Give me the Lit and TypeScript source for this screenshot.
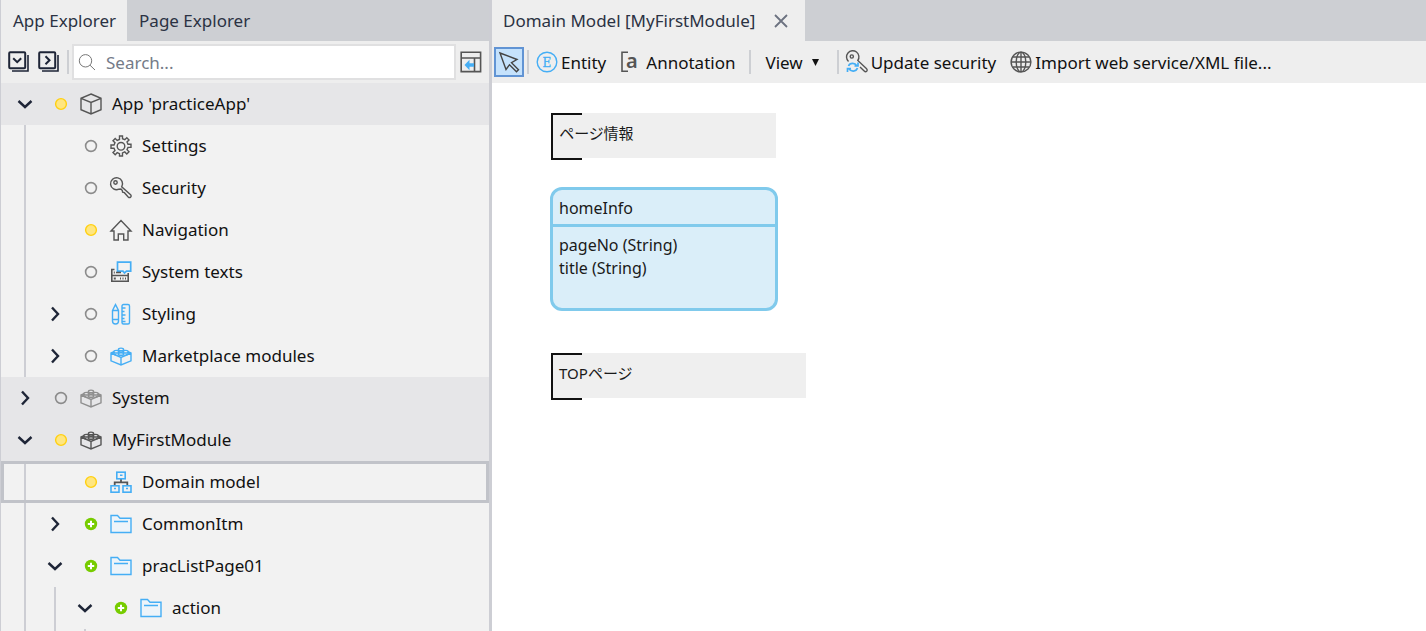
import { LitElement, html, svg, css, nothing, TemplateResult } from 'lit';
import { customElement, property, state } from 'lit/decorators.js';
import { classMap } from 'lit/directives/class-map.js';

const brick = svg`
  <path d="M4 6.6 1 8v7.8l10 4.200 10-4.200V8l-3-1.400M1 8l10 4.400L21 8M11 12.400V20"/>
  <path d="M8.400 4.400v1.400c0 .8 1.200 1.400 2.600 1.400s2.600-.6 2.600-1.400V4.400M3.800 6.800v1.600c0 .7 1 1.300 2.400 1.300M18.200 6.800v1.600c0 .7-1 1.300-2.400 1.300M8.400 9v1.600M13.600 9v1.600"/>
  <ellipse cx="11" cy="4.400" rx="2.600" ry="1.300"/>
  <ellipse cx="6.300" cy="6.700" rx="2.500" ry="1.300"/>
  <ellipse cx="15.700" cy="6.700" rx="2.500" ry="1.300"/>
  <ellipse cx="11" cy="9" rx="2.600" ry="1.300"/>`;

const icons: Record<string, TemplateResult> = {
  cube: svg`<path d="M11 1 21 5.300v11.400L11 21 1 16.700V5.300zM1 5.300l10 4.200 10-4.200M11 9.500V21"/>`,
  gear: svg`<path d="M9.500 1h3v2.700l2.300 1 2-2 2.200 2.200-2 2 1 2.300H21v3.200h-3l-1 2.300 2 2-2.200 2.200-2-2-2.300 1V21h-3v-2.300l-2.300-1-2 2L3 17.500l2-2-1-2.300H1V10h3l1-2.300-2-2 2.200-2.200 2 2 2.300-1z"/><circle cx="11" cy="11.300" r="3.800"/>`,
  key: svg`
    <path d="M11.700 9.800A6 6 0 1 0 9 12.200L11 12l1.300 1.500.3 1.700 1.800.5 3.800 4.200c.7.7 1.700.8 2.400.2.700-.7.700-1.700 0-2.400z"/>
    <circle cx="5.500" cy="5.500" r="1.700"/>`,
  home: svg`<path d="M1 12 11 1.500 21 12h-3v9h-4.300v-6H8.300v6H4v-9z"/>`,
  texts: svg`
    <path class="blue" stroke-width="1.700" d="M7.500 1.200h13.200v9h-4.200L14.500 12l-1.500-1.800H7.500z"/>
    <path stroke-width="1.600" d="M4.500 8.500H1.800V20.200h16.400V12M1.800 14.500h16.400M6 11.500h5"/>
    <path stroke-width="2" d="M3.800 11.500h1M3.800 17.500h2M10 17.500h1M12.500 17.500h1M15 17.500h1"/>`,
  styling: svg`
    <path d="M2.500 7.500 5.500 1.500l3 6V18c0 4-6 4-6 0zM2.500 7.500h6M2.500 16.500h6M5.500 1.500v2"/>
    <rect x="12" y="1.500" width="7.500" height="19.500" rx="1.500"/>
    <path d="M12 5h3.500M12 8.500h2.500M12 12h3.500M12 15.500h2.500M12 18.500h3.500"/>`,
  brick,
  domain: svg`
    <path d="M11 8v3.200M4.700 14.500v-3.200h12.600v3.200" stroke-width="1.800"/>
    <g class="blue" stroke-width="1.600"><rect x="6.800" y="1.200" width="8.400" height="6.600"/><rect x="1" y="14.800" width="8" height="6.400"/><rect x="13" y="14.800" width="8" height="6.400"/>
    <path d="M10 4.200h2.500M4 17.500h2M16 17.500h2" stroke-width="1.600"/></g>`,
  folder: svg`<path fill="#eef4f9" d="M1 19.500v-17h6.500l2.500 2.700h11v14.300zM4 8.500h14"/>`,
  collapse: svg`<path d="M20 4v16H4" stroke-width="1.600"/><rect x="1.200" y="1.200" width="16" height="16" rx="1" stroke-width="2"/><path d="m5.200 7.200 4 4 4-4" stroke-width="2"/>`,
  expand: svg`<path d="M20 4v16H4" stroke-width="1.600"/><rect x="1.200" y="1.200" width="16" height="16" rx="1" stroke-width="2"/><path d="m7.500 5.200 4 4-4 4" stroke-width="2"/>`,
  dock: svg`
    <path d="M1.200 1.200h19.400v19.400H1.200zM1.200 7h19.400M14.500 7v13.600" stroke-width="1.600"/>
    <path class="solid" d="M4.500 14 9.500 8.800v3.500H14v3.400H9.500v3.500z"/>`,
  search: svg`<circle cx="7.500" cy="9.800" r="6.200" stroke-width="1"/><path d="m12 14.200 5 4.800" stroke-width="1"/>`,
  close: svg`<path d="m5 5 12 12M17 5 5 17" stroke-width="1.800"/>`,
  pointer: svg`<path d="M2 2 19 8.500l-5.500 3.200 7 7-2 2-7-7L8 18.500z"/>`,
  entity: svg`<circle class="blue" cx="11" cy="11" r="9.800"/><text class="blue-text" x="11" y="15.500" text-anchor="middle">E</text>`,
  annotation: svg`<path d="M8 1.200H2v19h6" stroke-width="1.600"/><text class="letter" x="6" y="16.500">a</text>`,
  keysync: svg`
    <path d="M2.500 10.500A6.200 6.200 0 1 1 11.800 9.500l8.800 8.300c.8.800.8 1.700.1 2.500-.8.700-1.700.6-2.500-.2L14 16"/><circle cx="5.800" cy="5.500" r="1.600"/>
    <path class="blue" d="M2.500 15c1.500-3.500 6.500-3.500 8-.5M11.500 17c-1.500 4-6.500 4-8.500.8M12 11.500V15H8.500M1.500 21v-3.500H5" stroke-width="1.700"/>`,
  globe: svg`<circle cx="11" cy="11" r="9.900"/><ellipse cx="11" cy="11" rx="4.800" ry="9.900"/><path d="M11 1v20M1 11h20M2.800 6h16.400M2.800 16h16.400"/>`,
};

@customElement('ui-icon')
class UiIcon extends LitElement {
  @property() name = '';
  static styles = css`
    :host { display: block; flex: none; width: 22px; height: 22px; }
    .art { display: block; width: 22px; height: 22px; overflow: visible; fill: none; stroke: currentColor; stroke-width: 1.4; }
    .blue { stroke: #45aef5; }
    .solid { fill: #45aef5; stroke: none; }
    .blue-text { fill: #45aef5; stroke: #45aef5; stroke-width: 0.3; font: 12px "DejaVu Serif", serif; }
    .letter { fill: currentColor; stroke: none; font: 600 20px "Noto Sans", sans-serif; }
  `;
  render() {
    return html`<svg class="art" viewBox="0 0 22 22" aria-hidden="true">${icons[this.name]}</svg>`;
  }
}

type Status = 'clean' | 'changed' | 'added';
interface TreeNode {
  depth: number;
  label: string;
  icon: string;
  status: Status;
  open?: boolean;
  tone?: 'blue' | 'muted';
}

const nodes: TreeNode[] = [
  { depth: 0, label: "App 'practiceApp'", icon: 'cube', status: 'changed', open: true },
  { depth: 1, label: 'Settings', icon: 'gear', status: 'clean' },
  { depth: 1, label: 'Security', icon: 'key', status: 'clean' },
  { depth: 1, label: 'Navigation', icon: 'home', status: 'changed' },
  { depth: 1, label: 'System texts', icon: 'texts', status: 'clean' },
  { depth: 1, label: 'Styling', icon: 'styling', status: 'clean', open: false, tone: 'blue' },
  { depth: 1, label: 'Marketplace modules', icon: 'brick', status: 'clean', open: false, tone: 'blue' },
  { depth: 0, label: 'System', icon: 'brick', status: 'clean', open: false, tone: 'muted' },
  { depth: 0, label: 'MyFirstModule', icon: 'brick', status: 'changed', open: true },
  { depth: 1, label: 'Domain model', icon: 'domain', status: 'changed' },
  { depth: 1, label: 'CommonItm', icon: 'folder', status: 'added', open: false, tone: 'blue' },
  { depth: 1, label: 'pracListPage01', icon: 'folder', status: 'added', open: true, tone: 'blue' },
  { depth: 2, label: 'action', icon: 'folder', status: 'added', open: true, tone: 'blue' },
];

@customElement('app-explorer')
class AppExplorer extends LitElement {
  @state() private selected = 'Domain model';

  static styles = css`
    :host { display: flex; flex-direction: column; min-height: 0; background: #f2f2f2; }
    button { font: inherit; color: inherit; border: 0; background: none; padding: 0; margin: 0; }
    .tabs { display: flex; height: 41px; background: #cdcfd3; color: #2b3243; flex: none; }
    .tab { padding: 0 11px 0 12px; }
    .tab.active { background: #eee; }
    .tools { display: flex; align-items: center; height: 42px; padding: 0 7px; background: #eee; color: #1e2537; flex: none; }
    .fold { margin-right: 8px; }
    .rule { width: 2px; height: 24px; background: #cdcfd3; margin: 0 3px 0 -1px; }
    .search { display: flex; align-items: center; flex: 1; min-width: 0; height: 36px; box-sizing: border-box; border: 2px solid #e0e0e1; background: #fff; padding-left: 4px; color: #777; margin-right: 4px; }
    .query { flex: 1; min-width: 0; border: 0; outline: 0; padding: 2px 0 0; margin-left: 6px; background: none; font: inherit; color: #1e2537; }
    .query::placeholder { color: #747b88; opacity: 1; }
    .dock { color: #555; }
    .tree { list-style: none; margin: 0; padding: 0; flex: 1; min-height: 0; overflow: hidden; }
    .row { display: flex; align-items: center; height: 42px; box-sizing: border-box; padding-left: 9px; position: relative; color: #111; }
    .row.root { background: #e6e6e8; }
    .row.selected::after { content: ""; position: absolute; inset: 0; border: 3px solid #c1c3c9; pointer-events: none; }
    .guide { flex: none; width: 30px; align-self: stretch; background: linear-gradient(#cdced4, #cdced4) center / 2px 100% no-repeat; }
    .toggle { flex: none; width: 30px; height: 30px; color: #1e2537; }
    .arrow { display: block; margin: auto; width: 16px; height: 16px; fill: none; stroke: currentColor; stroke-width: 2.4; }
    .status { flex: none; width: 12px; height: 12px; margin: 0 13px 0 15px; overflow: visible; }
    .clean { fill: none; stroke: #8c8c8c; stroke-width: 1.6; }
    .changed { fill: #ffe680; stroke: #ffd012; stroke-width: 1.4; }
    .added { fill: #77cc00; stroke: none; }
    .plus { stroke: #fff; stroke-width: 2; }
    .item { display: flex; align-items: center; gap: 10px; white-space: nowrap; }
    .kind { color: #555; }
    .kind.blue { color: #45aef5; }
    .kind.muted { color: #8f8f8f; }
  `;

  private row(n: TreeNode) {
    const guides = Array.from({ length: n.depth }, () => html`<span class="guide"></span>`);
    return html`
      <li class=${classMap({ row: true, root: n.depth === 0, selected: n.label === this.selected })}>
        ${guides}
        ${n.open === undefined
          ? html`<span class="toggle"></span>`
          : html`<button class="toggle" aria-label="Toggle ${n.label}" aria-expanded=${n.open}>
              <svg class="arrow" viewBox="0 0 16 16"><path d=${n.open ? 'm1.500 5 6.500 6 6.500-6' : 'm5 1.500 6 6.500-6 6.500'} /></svg>
            </button>`}
        <svg class="status" viewBox="0 0 12 12">
          <circle class=${n.status} cx="6" cy="6" r=${n.status === 'added' ? 6.2 : 5.4} />
          ${n.status === 'added' ? svg`<path class="plus" d="M6 2.800v6.400M2.800 6h6.400"/>` : nothing}
        </svg>
        <button class="item" @click=${() => (this.selected = n.label)}>
          <ui-icon class="kind ${n.tone ?? ''}" name=${n.icon}></ui-icon>${n.label}
        </button>
      </li>`;
  }

  render() {
    return html`
      <div class="tabs" role="tablist">
        <button class="tab active" role="tab" aria-selected="true">App Explorer</button>
        <button class="tab" role="tab" aria-selected="false">Page Explorer</button>
      </div>
      <div class="tools">
        <button class="fold" aria-label="Collapse all"><ui-icon name="collapse"></ui-icon></button>
        <button class="fold" aria-label="Expand all"><ui-icon name="expand"></ui-icon></button>
        <span class="rule"></span>
        <label class="search">
          <ui-icon name="search"></ui-icon>
          <input class="query" type="text" placeholder="Search..." aria-label="Search" />
        </label>
        <button class="dock" aria-label="Dock panel"><ui-icon name="dock"></ui-icon></button>
      </div>
      <ul class="tree">
        ${nodes.map((n) => this.row(n))}
        <li class="row"><span class="guide"></span><span class="guide"></span><span class="guide"></span></li>
      </ul>`;
  }
}

@customElement('domain-editor')
class DomainEditor extends LitElement {
  static styles = css`
    :host { display: flex; flex-direction: column; min-width: 0; background: #fff; }
    button { font: inherit; color: inherit; border: 0; background: none; padding: 0; margin: 0; white-space: nowrap; }
    .tabs { display: flex; height: 41px; background: #cdcfd3; color: #2b3243; flex: none; }
    .tab { display: flex; align-items: center; background: #eee; padding: 0 13px 0 11px; gap: 15px; }
    .close { color: #6c7280; }
    .tools { display: flex; align-items: center; height: 42px; padding-left: 2px; background: #eee; color: #111; flex: none; }
    .pointer { box-sizing: border-box; width: 30px; height: 30px; border: 2px solid #6194d4; background: #c5e2fc; padding: 2px; color: #444; margin-right: 3px; }
    .rule { flex: none; width: 2px; height: 24px; background: #cdcfd3; }
    .tool { display: flex; align-items: center; gap: 3px; }
    .caption { padding-top: 2px; }
    .glyph { color: #555; }
    .entity { margin: 0 14px 0 7px; }
    .annotation { margin-right: 14px; gap: 4px; }
    .view { margin: 0 18px 0 14px; gap: 9px; }
    .caret { width: 7px; height: 7px; fill: #111; }
    .update { margin: 0 14px 0 7px; }
    .canvas { position: relative; flex: 1; min-height: 0; overflow: hidden; font-size: 16px; line-height: 23px; color: #1a1a1a; }
    .note { position: absolute; left: 59px; width: 225px; height: 45px; box-sizing: border-box; padding: 9px 8px; background: #efefef; font-size: 15px; font-feature-settings: "palt"; }
    .note::before { content: ""; position: absolute; left: 0; top: 0; width: 31px; height: 47px; box-sizing: border-box; border: 2px solid #111; border-right: 0; }
    .info { top: 30px; }
    .top { top: 270px; width: 255px; }
    .card { position: absolute; left: 58px; top: 104px; width: 228px; height: 124px; box-sizing: border-box; border: 3px solid #80caec; border-radius: 12px; background: #daeef9; }
    .name { margin: 0; padding: 7px 6px; height: 20px; font: inherit; border-bottom: 3px solid #80caec; }
    .attrs { list-style: none; margin: 0; padding: 7px 6px; }
  `;

  render() {
    return html`
      <div class="tabs" role="tablist">
        <div class="tab" role="tab" aria-selected="true">
          <span>Domain Model [MyFirstModule]</span>
          <button class="close" aria-label="Close tab"><ui-icon name="close"></ui-icon></button>
        </div>
      </div>
      <div class="tools">
        <button class="pointer" aria-label="Select"><ui-icon name="pointer"></ui-icon></button>
        <span class="rule"></span>
        <button class="tool entity"><ui-icon class="glyph" name="entity"></ui-icon><span class="caption">Entity</span></button>
        <button class="tool annotation"><ui-icon class="glyph" name="annotation"></ui-icon><span class="caption">Annotation</span></button>
        <span class="rule"></span>
        <button class="tool view"><span class="caption">View</span><svg class="caret" viewBox="0 0 7 7"><path d="M0 0h7L3.500 7z" /></svg></button>
        <span class="rule"></span>
        <button class="tool update"><ui-icon class="glyph" name="keysync"></ui-icon><span class="caption">Update security</span></button>
        <button class="tool"><ui-icon class="glyph" name="globe"></ui-icon><span class="caption">Import web service/XML file...</span></button>
      </div>
      <div class="canvas">
        <div class="note info" lang="ja">ページ情報</div>
        <section class="card">
          <h2 class="name">homeInfo</h2>
          <ul class="attrs"><li>pageNo (String)</li><li>title (String)</li></ul>
        </section>
        <div class="note top" lang="ja">TOPページ</div>
      </div>`;
  }
}

@customElement('app-root')
class AppRoot extends LitElement {
  static styles = css`
    :host { display: flex; height: 100vh; overflow: hidden; font: 17px/24px "Noto Sans", "Noto Sans CJK JP", sans-serif; }
    .explorer { flex: none; width: 488px; border-left: 1px solid #cdced4; border-right: 3px solid #cdced4; }
    .editor { flex: 1; }
  `;
  render() {
    return html`<app-explorer class="explorer"></app-explorer><domain-editor class="editor"></domain-editor>`;
  }
}
